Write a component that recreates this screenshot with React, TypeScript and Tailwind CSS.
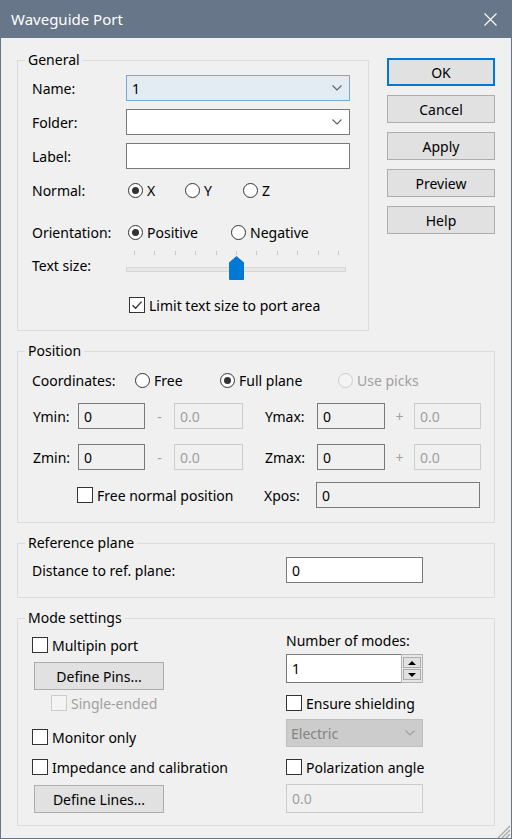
import React from 'react';

// Waveguide Port dialog (Windows look, 125% scale)

function Radio({ checked = false, disabled = false, label, className = '' }: { checked?: boolean; disabled?: boolean; label: string; className?: string }) {
  return (
    <div className={`flex items-center h-[20px] ${className}`}>
      <span
        className={`w-[15px] h-[15px] rounded-full border flex items-center justify-center shrink-0 ${
          disabled ? 'border-[#cccccc] bg-[#f4f4f4]' : 'border-[#333333] bg-white'
        }`}
      >
        {checked && <span className="w-[7px] h-[7px] rounded-full bg-[#333333]" />}
      </span>
      <span className={`ml-[4px] whitespace-nowrap ${disabled ? 'text-[#a0a0a0]' : ''}`}>{label}</span>
    </div>
  );
}

function Check({ checked = false, disabled = false, label, className = '' }: { checked?: boolean; disabled?: boolean; label: string; className?: string }) {
  return (
    <div className={`flex items-center h-[20px] ${className}`}>
      <span
        className={`w-[16px] h-[16px] border flex items-center justify-center shrink-0 ${
          disabled ? 'border-[#cccccc] bg-[#f4f4f4]' : 'border-[#333333] bg-white'
        }`}
      >
        {checked && (
          <svg width="14" height="14" viewBox="0 0 14 14">
            <path d="M2.5 7.2 L5.6 10.3 L11.6 3.6" fill="none" stroke="#333333" strokeWidth="1.3" />
          </svg>
        )}
      </span>
      <span className={`ml-[4px] whitespace-nowrap ${disabled ? 'text-[#a0a0a0]' : ''}`}>{label}</span>
    </div>
  );
}

function Chevron({ color = '#606060' }: { color?: string }) {
  return (
    <svg width="10" height="6" viewBox="0 0 10 6">
      <path d="M0.5 0.5 L5 5 L9.5 0.5" fill="none" stroke={color} strokeWidth="1.1" />
    </svg>
  );
}

function Field({ value = '', kind = 'white', className = '' }: { value?: string; kind?: 'white' | 'readonly' | 'disabled'; className?: string }) {
  const look =
    kind === 'white'
      ? 'bg-white border-[#7a7a7a]'
      : kind === 'readonly'
      ? 'bg-[#f0f0f0] border-[#7a7a7a]'
      : 'bg-[#f0f0f0] border-[#cccccc] text-[#a0a0a0]';
  return <div className={`h-[26px] border flex items-center pl-[5px] ${look} ${className}`}>{value}</div>;
}

function Button({ label, primary = false, className = '' }: { label: string; primary?: boolean; className?: string }) {
  return (
    <div
      className={`h-[28px] flex items-center justify-center bg-[#e1e1e1] ${
        primary ? 'border-2 border-[#0078d7]' : 'border border-[#adadad]'
      } ${className}`}
    >
      {label}
    </div>
  );
}

function Group({ title, className = '', children }: { title: string; className?: string; children: React.ReactNode }) {
  return (
    <fieldset className={`border border-[#dcdcdc] p-0 ${className}`}>
      <legend className="ml-[7px] px-[3px] leading-[18px]">{title}</legend>
      {children}
    </fieldset>
  );
}

export default function App() {
  const ticks = Array.from({ length: 11 });

  return (
    <div className="w-[512px] h-[839px] bg-[#687689] flex flex-col font-['Noto_Sans','Liberation_Sans',sans-serif] text-[14px] text-black">
      {/* title bar */}
      <div className="h-[38px] flex items-center justify-between pl-[11px] pr-[15px] shrink-0">
        <span className="text-white text-[15px]">Waveguide Port</span>
        <svg width="13" height="13" viewBox="0 0 13 13">
          <path d="M0.5 0.5 L12.5 12.5 M12.5 0.5 L0.5 12.5" stroke="#ffffff" strokeWidth="1.1" />
        </svg>
      </div>

      <div className="flex-1 mx-[1px] mb-[1px] bg-[#f0f0f0] relative">
        <div className="flex">
          {/* General */}
          <Group title="General" className="ml-[16px] mt-[13px] w-[352px]">
            <div className="pl-[14px] pt-[6px] pb-[15px]">
              <div className="flex items-center">
                <span className="w-[94px]">Name:</span>
                <div className="w-[224px] h-[26px] border border-[#7aa6d6] bg-[#e3ebf3] flex items-center justify-between pl-[5px] pr-[7px]">
                  <span>1</span>
                  <Chevron />
                </div>
              </div>
              <div className="flex items-center mt-[8px]">
                <span className="w-[94px]">Folder:</span>
                <div className="w-[224px] h-[26px] border border-[#7a7a7a] bg-white flex items-center justify-end pr-[7px]">
                  <Chevron />
                </div>
              </div>
              <div className="flex items-center mt-[8px]">
                <span className="w-[94px]">Label:</span>
                <Field className="w-[224px]" />
              </div>
              <div className="flex items-center mt-[11px]">
                <span className="w-[96px]">Normal:</span>
                <Radio checked label="X" className="w-[57px]" />
                <Radio label="Y" className="w-[58px]" />
                <Radio label="Z" />
              </div>
              <div className="flex items-center mt-[21px]">
                <span className="w-[96px]">Orientation:</span>
                <Radio checked label="Positive" className="w-[103px]" />
                <Radio label="Negative" />
              </div>
              <div className="flex items-center mt-[7px]">
                <span className="w-[94px] -mt-[4px]">Text size:</span>
                <div className="relative w-[220px] h-[34px]">
                  <div className="flex justify-between pl-[8px] pr-[7px] mt-[1px]">
                    {ticks.map((_, i) => (
                      <span key={i} className="w-[1px] h-[4px] bg-[#c8c8c8]" />
                    ))}
                  </div>
                  <div className="mt-[12px] h-[5px] bg-[#e7e7e7] border border-[#d6d6d6]" />
                  <svg className="absolute left-[103px] top-[6px]" width="15" height="24" viewBox="0 0 15 24">
                    <path d="M7.5 0 L15 6.5 V23 Q15 24 14 24 H1 Q0 24 0 23 V6.5 Z" fill="#0078d7" />
                  </svg>
                </div>
              </div>
              <Check checked label="Limit text size to port area" className="ml-[97px] mt-[11px]" />
            </div>
          </Group>

          {/* buttons */}
          <div className="ml-[18px] mt-[20px] w-[108px] flex flex-col gap-[9px]">
            <Button label="OK" primary />
            <Button label="Cancel" />
            <Button label="Apply" />
            <Button label="Preview" />
            <Button label="Help" />
          </div>
        </div>

        {/* Position */}
        <Group title="Position" className="ml-[16px] mt-[11px] w-[478px]">
          <div className="pl-[14px] pt-[10px] pb-[14px]">
            <div className="flex items-center">
              <span className="w-[103px]">Coordinates:</span>
              <Radio label="Free" className="w-[85px]" />
              <Radio checked label="Full plane" className="w-[118px]" />
              <Radio disabled label="Use picks" />
            </div>
            <div className="flex items-center mt-[12px]">
              <span className="w-[46px] pl-[1px]">Ymin:</span>
              <Field kind="readonly" value="0" className="w-[67px]" />
              <span className="w-[29px] text-center text-[#a0a0a0]">-</span>
              <Field kind="disabled" value="0.0" className="w-[69px]" />
              <span className="w-[22px]" />
              <span className="w-[52px]">Ymax:</span>
              <Field kind="readonly" value="0" className="w-[68px]" />
              <span className="w-[29px] text-center text-[#a0a0a0]">+</span>
              <Field kind="disabled" value="0.0" className="w-[67px]" />
            </div>
            <div className="flex items-center mt-[15px]">
              <span className="w-[46px] pl-[1px]">Zmin:</span>
              <Field kind="readonly" value="0" className="w-[67px]" />
              <span className="w-[29px] text-center text-[#a0a0a0]">-</span>
              <Field kind="disabled" value="0.0" className="w-[69px]" />
              <span className="w-[22px]" />
              <span className="w-[52px]">Zmax:</span>
              <Field kind="readonly" value="0" className="w-[68px]" />
              <span className="w-[29px] text-center text-[#a0a0a0]">+</span>
              <Field kind="disabled" value="0.0" className="w-[67px]" />
            </div>
            <div className="flex items-center mt-[12px]">
              <div className="w-[232px] pl-[45px]">
                <Check label="Free normal position" />
              </div>
              <span className="w-[52px]">Xpos:</span>
              <Field kind="readonly" value="0" className="w-[164px]" />
            </div>
          </div>
        </Group>

        {/* Reference plane */}
        <Group title="Reference plane" className="ml-[16px] mt-[11px] w-[478px]">
          <div className="pl-[14px] pt-[5px] pb-[14px] flex items-center">
            <span className="w-[254px]">Distance to ref. plane:</span>
            <Field value="0" className="w-[137px]" />
          </div>
        </Group>

        {/* Mode settings */}
        <Group title="Mode settings" className="ml-[16px] mt-[11px] w-[478px]">
          <div className="pl-[14px] pb-[12px] flex">
            <div className="w-[254px] flex flex-col">
              <Check label="Multipin port" className="mt-[8px]" />
              <Button label="Define Pins..." className="w-[130px] ml-[2px] mt-[7px]" />
              <Check disabled label="Single-ended" className="ml-[19px] mt-[3px]" />
              <Check label="Monitor only" className="mt-[14px]" />
              <Check label="Impedance and calibration" className="mt-[10px]" />
              <Button label="Define Lines..." className="w-[130px] ml-[2px] mt-[8px]" />
            </div>
            <div className="w-[137px] flex flex-col">
              <div className="h-[20px] flex items-center mt-[3px]">Number of modes:</div>
              <div className="flex h-[29px] mt-[4px]">
                <div className="flex-1 border border-[#7a7a7a] border-r-0 bg-white flex items-center pl-[5px]">1</div>
                <div className="w-[22px] border border-[#b4b4b4] bg-[#e6e6e6] flex flex-col justify-center gap-[1px] px-[1px]">
                  <div className="h-[11px] bg-[#e1e1e1] border border-[#adadad] flex items-center justify-center">
                    <svg width="8" height="4" viewBox="0 0 8 4">
                      <path d="M0 4 L4 0 L8 4 Z" fill="#000000" />
                    </svg>
                  </div>
                  <div className="h-[11px] bg-[#e1e1e1] border border-[#adadad] flex items-center justify-center">
                    <svg width="8" height="4" viewBox="0 0 8 4">
                      <path d="M0 0 L8 0 L4 4 Z" fill="#000000" />
                    </svg>
                  </div>
                </div>
              </div>
              <Check label="Ensure shielding" className="mt-[10px]" />
              <div className="h-[28px] mt-[6px] bg-[#cccccc] border border-[#bfbfbf] flex items-center justify-between pl-[4px] pr-[7px] text-[#838383]">
                <span>Electric</span>
                <Chevron color="#a0a0a0" />
              </div>
              <Check label="Polarization angle" className="mt-[10px]" />
              <Field kind="disabled" value="0.0" className="h-[29px] mt-[7px]" />
            </div>
          </div>
        </Group>

        {/* size grip */}
        <svg className="absolute right-0 bottom-0" width="14" height="13" viewBox="0 0 14 13">
          <path d="M13 1 L1 13 M13 5 L5 13 M13 9 L9 13" stroke="#a8a8a8" strokeWidth="1.4" />
        </svg>
      </div>
    </div>
  );
}
